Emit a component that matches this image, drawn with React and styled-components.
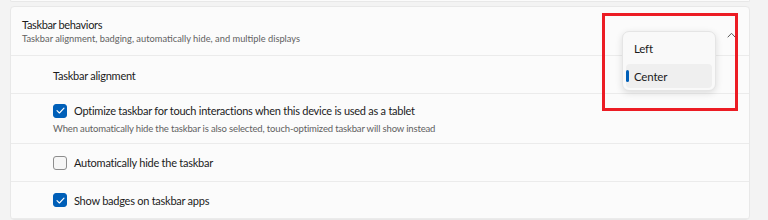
import React from "react";
import styled, { createGlobalStyle } from "styled-components";

const GlobalStyle = createGlobalStyle`
  html, body {
    margin: 0;
    padding: 0;
    background: #f3f3f3;
    font-family: Lato, "Noto Sans", sans-serif;
    color: #1b1b1b;
  }
`;

const Page = styled.div`
  width: 768px;
  height: 220px;
  overflow: hidden;
  padding: 0 18px 0 10px;
  box-sizing: border-box;
  display: flex;
  flex-direction: column;
  gap: 4px;
`;

const TopCard = styled.div`
  height: 2px;
  background: #fbfbfb;
  border: 1px solid #e8e8e8;
  border-top: none;
  border-radius: 0 0 4px 4px;
`;

const Card = styled.div`
  position: relative;
  background: #fbfbfb;
  border: 1px solid #e8e8e8;
  border-radius: 4px;
  display: flex;
  flex-direction: column;
`;

const Header = styled.div`
  height: 48px;
  padding: 0 12px 0 11px;
  display: flex;
  flex-direction: column;
  justify-content: center;
  border-bottom: 1px solid #ebebeb;
`;

const Title = styled.div`
  font-size: 11px;
  letter-spacing: -0.35px;
  line-height: 15px;
  color: #1b1b1b;
`;

const Subtitle = styled.div`
  font-size: 9.3px;
  line-height: 13px;
  color: #616161;
`;

const Chevron = styled.svg`
  position: absolute;
  right: 13px;
  top: 25px;
`;

const Row = styled.div`
  height: ${(p) => p.$h}px;
  padding-left: 42px;
  padding-top: ${(p) => p.$shift || 0}px;
  display: flex;
  flex-direction: column;
  justify-content: center;
  border-bottom: 1px solid #ebebeb;
  box-sizing: border-box;
`;

const Label = styled.div`
  font-size: 11px;
  letter-spacing: -0.25px;
  line-height: 15px;
  color: #1b1b1b;
`;

const CheckLine = styled.div`
  display: flex;
  align-items: center;
  gap: 7px;
`;

const Box = styled.span`
  width: 14px;
  height: 14px;
  border-radius: 3px;
  box-sizing: border-box;
  display: flex;
  align-items: center;
  justify-content: center;
  background: ${(p) => (p.$checked ? "#005fb8" : "#f6f6f6")};
  border: 1px solid ${(p) => (p.$checked ? "#005fb8" : "#8d8d8d")};
`;

const Hint = styled.div`
  font-size: 9.5px;
  letter-spacing: -0.15px;
  line-height: 13px;
  color: #616161;
  margin-top: 4px;
`;

const Menu = styled.div`
  position: absolute;
  left: 611px;
  top: 24px;
  width: 94px;
  height: 60px;
  box-sizing: border-box;
  padding: 4px 3px;
  gap: 4px;
  background: #f9f9f9;
  border: 1px solid #e5e5e5;
  border-radius: 7px;
  box-shadow: 0 2px 7px rgba(0, 0, 0, 0.13);
  display: flex;
  flex-direction: column;
`;

const MenuItem = styled.div`
  position: relative;
  height: 24px;
  flex: none;
  padding-left: 8px;
  display: flex;
  align-items: center;
  font-size: 11.5px;
  letter-spacing: -0.2px;
  color: #1b1b1b;
  border-radius: 4px;
  background: ${(p) => (p.$selected ? "#efefef" : "transparent")};

  &::before {
    content: "";
    display: ${(p) => (p.$selected ? "block" : "none")};
    position: absolute;
    left: 0;
    top: 6px;
    width: 3px;
    height: 12px;
    border-radius: 2px;
    background: #005fb8;
  }
`;

const Highlight = styled.div`
  position: absolute;
  left: 591px;
  top: 6px;
  width: 136px;
  height: 98px;
  box-sizing: border-box;
  border: 3px solid #ec1c24;
  pointer-events: none;
`;

const Check = () => (
  <svg width="9" height="7" viewBox="0 0 9 7">
    <path d="M1 3.6 L3.4 6 L8 1.2" fill="none" stroke="#fff" strokeWidth="1.1" strokeLinecap="round" strokeLinejoin="round" />
  </svg>
);

const CheckItem = ({ checked, children }) => (
  <CheckLine>
    <Box $checked={checked}>{checked && <Check />}</Box>
    <Label>{children}</Label>
  </CheckLine>
);

export default function App() {
  return (
    <>
      <GlobalStyle />
      <Page>
        <TopCard />
        <Card>
          <Header>
            <Title>Taskbar behaviors</Title>
            <Subtitle>Taskbar alignment, badging, automatically hide, and multiple displays</Subtitle>
          </Header>
          <Chevron width="9" height="6" viewBox="0 0 9 6">
            <path d="M1 5 L4.5 1.3 L8 5" fill="none" stroke="#5a5a5a" strokeWidth="1" strokeLinecap="round" />
          </Chevron>
          <Row $h={38} $shift={2}>
            <Label>Taskbar alignment</Label>
          </Row>
          <Row $h={50} $shift={1}>
            <CheckItem checked>Optimize taskbar for touch interactions when this device is used as a tablet</CheckItem>
            <Hint>
              When automatically hide the taskbar is also selected, touch-optimized taskbar will show instead
            </Hint>
          </Row>
          <Row $h={38}>
            <CheckItem>Automatically hide the taskbar</CheckItem>
          </Row>
          <Row $h={37}>
            <CheckItem checked>Show badges on taskbar apps</CheckItem>
          </Row>
          <Menu>
            <MenuItem>Left</MenuItem>
            <MenuItem $selected>Center</MenuItem>
          </Menu>
          <Highlight />
        </Card>
      </Page>
    </>
  );
}
